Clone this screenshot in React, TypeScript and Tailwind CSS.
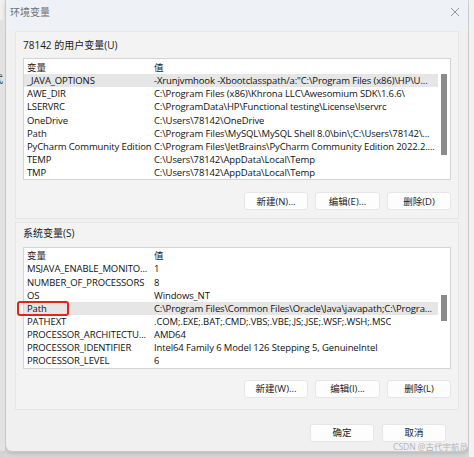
import React from "react";

const FONT = "font-['Open_Sans','Noto_Sans_CJK_SC',sans-serif]";

type Row = { name: string; value: string; selected?: boolean; marked?: boolean };

const userRows: Row[] = [
  { name: "_JAVA_OPTIONS", value: '-Xrunjvmhook -Xbootclasspath/a:"C:\\Program Files (x86)\\HP\\U...', selected: true },
  { name: "AWE_DIR", value: "C:\\Program Files (x86)\\Khrona LLC\\Awesomium SDK\\1.6.6\\" },
  { name: "LSERVRC", value: "C:\\ProgramData\\HP\\Functional testing\\License\\lservrc" },
  { name: "OneDrive", value: "C:\\Users\\78142\\OneDrive" },
  { name: "Path", value: "C:\\Program Files\\MySQL\\MySQL Shell 8.0\\bin\\;C:\\Users\\78142\\..." },
  { name: "PyCharm Community Edition", value: "C:\\Program Files\\JetBrains\\PyCharm Community Edition 2022.2...." },
  { name: "TEMP", value: "C:\\Users\\78142\\AppData\\Local\\Temp" },
  { name: "TMP", value: "C:\\Users\\78142\\AppData\\Local\\Temp" },
];

const sysRows: Row[] = [
  { name: "MSJAVA_ENABLE_MONITO...", value: "1" },
  { name: "NUMBER_OF_PROCESSORS", value: "8" },
  { name: "OS", value: "Windows_NT" },
  { name: "Path", value: "C:\\Program Files\\Common Files\\Oracle\\Java\\javapath;C:\\Progra...", selected: true, marked: true },
  { name: "PATHEXT", value: ".COM;.EXE;.BAT;.CMD;.VBS;.VBE;.JS;.JSE;.WSF;.WSH;.MSC" },
  { name: "PROCESSOR_ARCHITECTU...", value: "AMD64" },
  { name: "PROCESSOR_IDENTIFIER", value: "Intel64 Family 6 Model 126 Stepping 5, GenuineIntel" },
  { name: "PROCESSOR_LEVEL", value: "6" },
];

function VarList({ rows, padTop, thumbTop, thumbH }: { rows: Row[]; padTop: string; thumbTop: string; thumbH: string }) {
  return (
    <div className={`flex w-[428px] border border-[#d4d4d4] bg-white ${padTop}`}>
      <div className="flex-1 min-w-0 flex flex-col">
        <div className="flex h-[13.15px] items-center pl-[3px] text-[9.5px] leading-[13px] text-[#222]">
          <span className="w-[127px] shrink-0">变量</span>
          <span>值</span>
        </div>
        {rows.map((r, i) => (
          <div
            key={i}
            className={`relative flex h-[13.15px] items-center pl-[3px] text-[9.5px] leading-[13px] tracking-[-0.12px] text-[#111] whitespace-nowrap ${r.selected ? "bg-[#e6e6e6]" : ""}`}
          >
            <span className="w-[127px] shrink-0">{r.name}</span>
            <span className="min-w-0 overflow-hidden">{r.value}</span>
            {r.marked && (
              <span className="absolute left-[-7px] top-[-1px] h-[15px] w-[52px] rounded-[3px] border-2 border-[#e0241f]" />
            )}
          </div>
        ))}
      </div>
      <div className="w-[12px] shrink-0 flex justify-center">
        <div className={`w-[6px] bg-[#8b8b8b] ${thumbTop} ${thumbH}`} />
      </div>
    </div>
  );
}

function Btn({ label, w = "w-[64px]" }: { label: string; w?: string }) {
  return (
    <div
      className={`${w} h-[18px] flex items-center justify-center rounded-[3px] border border-[#e6e6e6] bg-[#fdfdfd] text-[9.5px] leading-[13px] text-[#222]`}
    >
      {label}
    </div>
  );
}

export default function App() {
  return (
    <div className={`${FONT} relative flex h-[457px] w-[474px] overflow-hidden bg-[#d9d9d9]`}>
      {/* background window strip on the left */}
      <div className="flex w-[5px] shrink-0 flex-col">
        <div className="h-[20px] bg-[#f0f0f0]" />
        <div className="relative flex-1 overflow-hidden bg-[#e2e2e2]">
          <span className="absolute left-[-7px] top-[54px] text-[10px] leading-none text-[#333]">式</span>
        </div>
        <div className="h-[6px] bg-[#d4d4d4]" />
      </div>

      {/* dialog window */}
      <div className="flex h-[452px] w-[464px] shrink-0 flex-col rounded-b-[7px] rounded-tr-[8px] border border-t-0 border-[#c9c9c9] bg-[#f0f0f0] shadow-[0_2px_4px_rgba(0,0,0,0.15)]">
        {/* title bar */}
        <div className="flex h-[31px] shrink-0 items-start justify-between bg-[#eef2f6] pl-[4px] pr-[8px] pt-[5px]">
          <span className="text-[10px] leading-[14px] text-[#707070]">环境变量</span>
          <svg width="10" height="10" viewBox="0 0 10 10" className="mt-[2px]">
            <path d="M1 1 L9 9 M9 1 L1 9" stroke="#8a8a8a" strokeWidth="0.9" fill="none" />
          </svg>
        </div>

        {/* user variables */}
        <div className="ml-[9px] flex w-[444px] flex-col border border-[#e6e6e6] bg-[#f3f3f3] px-[7px] pb-[8px] pt-[6px]">
          <div className="text-[10px] leading-[14px] text-[#1a1a1a]">78142 的用户变量(U)</div>
          <div className="mt-[6px]">
            <VarList rows={userRows} padTop="pt-[2px]" thumbTop="mt-[13px]" thumbH="h-[81px]" />
          </div>
          <div className="mt-[12px] flex w-[428px] justify-end gap-[7px]">
            <Btn label="新建(N)..." />
            <Btn label="编辑(E)..." w="w-[65px]" />
            <Btn label="删除(D)" />
          </div>
        </div>

        {/* system variables */}
        <div className="ml-[9px] mt-[3px] flex w-[444px] flex-col border border-[#e6e6e6] bg-[#f3f3f3] px-[7px] pb-[11px] pt-[3px]">
          <div className="text-[10px] leading-[14px] text-[#1a1a1a]">系统变量(S)</div>
          <div className="mt-[7px]">
            <VarList rows={sysRows} padTop="pt-[1px]" thumbTop="mt-[46px]" thumbH="h-[26px]" />
          </div>
          <div className="mt-[11px] flex w-[428px] justify-end gap-[7px]">
            <Btn label="新建(W)..." />
            <Btn label="编辑(I)..." w="w-[65px]" />
            <Btn label="删除(L)" />
          </div>
        </div>

        {/* OK / Cancel */}
        <div className="mt-[14px] flex justify-end gap-[8px] pr-[22px]">
          <Btn label="确定" />
          <Btn label="取消" />
        </div>
      </div>

      <div className="flex-1 bg-[#f2f2f2]" />

      {/* watermark */}
      <span className="absolute right-[6px] top-[443px] text-[8.5px] leading-none text-[#b4b4b4]">CSDN @古代宇航员</span>
    </div>
  );
}
